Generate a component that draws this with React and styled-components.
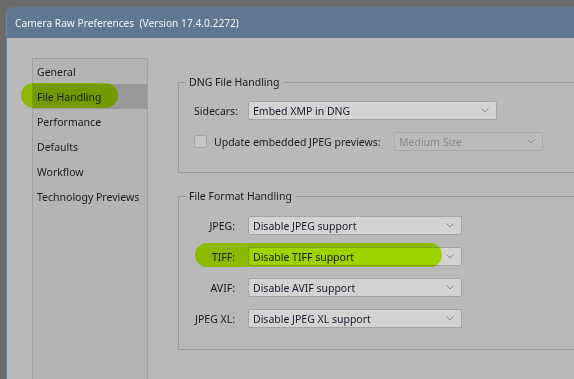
import React from "react";
import styled, { createGlobalStyle } from "styled-components";

const Global = createGlobalStyle`
  html, body { margin: 0; padding: 0; }
  body {
    background: #6b6b6b;
    width: 574px;
    height: 379px;
    overflow: hidden;
    font-family: "Noto Sans", "Open Sans", sans-serif;
  }
`;

const Screen = styled.div`
  padding: 7px 0 0 6px;
  height: 379px;
  box-sizing: border-box;
  overflow: hidden;
`;

const Window = styled.div`
  display: flex;
  flex-direction: column;
  width: 600px;
  height: 100%;
  border-top-left-radius: 6px;
  overflow: hidden;
  border-left: 1px solid #6d84a0;
`;

const TitleBar = styled.div`
  height: 31px;
  flex: none;
  background: #5f7791;
  color: #f2f4f7;
  font-size: 10.2px;
  display: flex;
  align-items: center;
  padding-left: 8px;
  white-space: pre;
`;

const Body = styled.div`
  flex: 1;
  background: #b9b9b9;
  display: flex;
  align-items: flex-start;
  padding: 20px 0 0 25px;
`;

const Sidebar = styled.ul`
  list-style: none;
  margin: 0;
  padding: 0;
  width: 114px;
  height: 400px;
  flex: none;
  background: #b4b4b4;
  border: 1px solid #a0a0a0;
`;

const NavItem = styled.li`
  position: relative;
  box-sizing: border-box;
  height: 25px;
  padding: 1px 0 0 4px;
  line-height: 25px;
  font-size: 10.5px;
  color: #1b1b1b;
  background: ${(p) => (p.$active ? "#999999" : "transparent")};
  white-space: nowrap;
`;

const Highlight = styled.span`
  position: absolute;
  left: ${(p) => p.$left}px;
  top: ${(p) => p.$top}px;
  width: ${(p) => p.$width}px;
  height: ${(p) => p.$height}px;
  border-radius: ${(p) => p.$height / 2}px;
  background: rgb(192, 255, 0);
  mix-blend-mode: multiply;
  pointer-events: none;
`;

const Main = styled.div`
  margin-left: 30px;
  display: flex;
  flex-direction: column;
  gap: 15px;
  margin-top: 16px;
`;

const Group = styled.fieldset`
  margin: 0;
  padding: 0;
  width: 420px;
  border: 1px solid #9c9c9c;
  border-right: none;
  min-inline-size: 0;
`;

const Legend = styled.legend`
  margin-left: 7px;
  padding: 0 3px;
  font-size: 10.5px;
  color: #1b1b1b;
  line-height: 16px;
`;

const GroupBody = styled.div`
  display: flex;
  flex-direction: column;
  gap: ${(p) => p.$gap}px;
  padding: ${(p) => p.$pad};
`;

const Row = styled.div`
  position: relative;
  display: flex;
  align-items: center;
  height: 19px;
`;

const FieldLabel = styled.label`
  font-size: 10.5px;
  color: #1b1b1b;
  white-space: nowrap;
  width: ${(p) => (p.$width ? `${p.$width}px` : "auto")};
  text-align: ${(p) => (p.$right ? "right" : "left")};
  margin-right: ${(p) => p.$gap}px;
  flex: none;
`;

const Select = styled.div`
  box-sizing: border-box;
  width: ${(p) => p.$width}px;
  height: 19px;
  flex: none;
  display: flex;
  align-items: center;
  justify-content: space-between;
  padding: 0 7px 0 4px;
  background: ${(p) => (p.$disabled ? "#bcbcbc" : "#d3d3d3")};
  border: 1px solid ${(p) => (p.$disabled ? "#a9a9a9" : "#a4a4a4")};
  border-radius: 2px;
  font-size: 10.5px;
  color: ${(p) => (p.$disabled ? "#8a8a8a" : "#1b1b2c")};
  white-space: nowrap;
`;

const Check = styled.span`
  box-sizing: border-box;
  width: 13px;
  height: 13px;
  flex: none;
  border: 1px solid #a6a6a6;
  border-radius: 2px;
  background: #c6c6c6;
  margin: 0 7px 0 0;
`;

const Chevron = () => (
  <svg width="8" height="5" viewBox="0 0 8 5">
    <path d="M0.5 0.5 L4 4 L7.5 0.5" fill="none" stroke="#8c8c8c" strokeWidth="1" />
  </svg>
);

const Dropdown = ({ width, disabled, children }) => (
  <Select $width={width} $disabled={disabled}>
    <span>{children}</span>
    <Chevron />
  </Select>
);

const nav = ["General", "File Handling", "Performance", "Defaults", "Workflow", "Technology Previews"];

const formats = [
  ["JPEG:", "Disable JPEG support"],
  ["TIFF:", "Disable TIFF support"],
  ["AVIF:", "Disable AVIF support"],
  ["JPEG XL:", "Disable JPEG XL support"],
];

export default function App() {
  return (
    <>
      <Global />
      <Screen>
        <Window>
          <TitleBar>Camera Raw Preferences  (Version 17.4.0.2272)</TitleBar>
          <Body>
            <Sidebar>
              {nav.map((n) => (
                <NavItem key={n} $active={n === "File Handling"}>
                  {n}
                  {n === "File Handling" && (
                    <Highlight $left={-12} $top={-1} $width={97} $height={25} />
                  )}
                </NavItem>
              ))}
            </Sidebar>
            <Main>
              <Group>
                <Legend>DNG File Handling</Legend>
                <GroupBody $gap={12} $pad="11px 0 21px 15px">
                  <Row>
                    <FieldLabel $width={54} $gap={0}>Sidecars:</FieldLabel>
                    <Dropdown width={249}>Embed XMP in DNG</Dropdown>
                  </Row>
                  <Row>
                    <Check />
                    <FieldLabel $width={180} $gap={0}>Update embedded JPEG previews:</FieldLabel>
                    <Dropdown width={149} disabled>
                      Medium Size
                    </Dropdown>
                  </Row>
                </GroupBody>
              </Group>
              <Group>
                <Legend>File Format Handling</Legend>
                <GroupBody $gap={12} $pad="12px 0 21px 3px">
                  {formats.map(([l, v]) => (
                    <Row key={l}>
                      <FieldLabel $width={53} $right $gap={13}>
                        {l}
                      </FieldLabel>
                      <Dropdown width={214}>{v}</Dropdown>
                      {l === "TIFF:" && (
                        <Highlight $left={13} $top={-4} $width={247} $height={24} />
                      )}
                    </Row>
                  ))}
                </GroupBody>
              </Group>
            </Main>
          </Body>
        </Window>
      </Screen>
    </>
  );
}
